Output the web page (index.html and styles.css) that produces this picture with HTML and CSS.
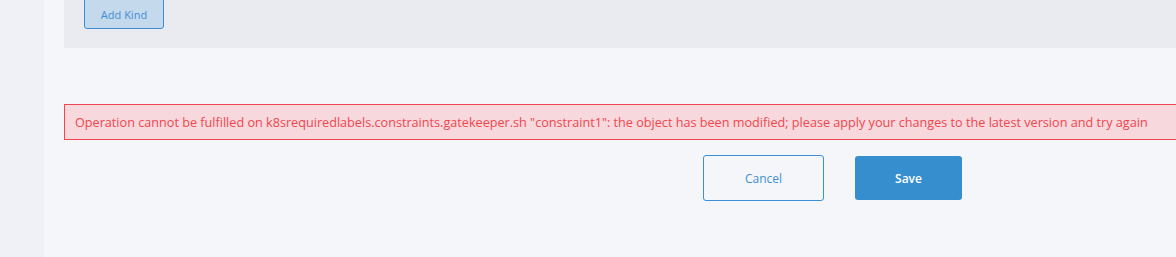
FILE: index.html
```html
<!DOCTYPE html>
<html>
<head>
<meta charset="utf-8">
<link rel="stylesheet" href="styles.css">
</head>
<body>
<div class="sidebar"></div>
<div class="main">
  <div class="panel">
    <button class="btn-add">Add Kind</button>
  </div>
  <div class="error">Operation cannot be fulfilled on k8srequiredlabels.constraints.gatekeeper.sh "constraint1": the object has been modified; please apply your changes to the latest version and try again</div>
  <div class="actions">
    <button class="btn-cancel">Cancel</button>
    <button class="btn-save">Save</button>
  </div>
</div>
</body>
</html>
```
FILE: styles.css
```css
html, body {
  margin: 0;
  height: 100%;
  overflow: hidden;
}
body {
  display: flex;
  font-family: "Open Sans", "Noto Sans", sans-serif;
  background: #f5f6fa;
}
.sidebar {
  width: 44px;
  flex: none;
  background: #f0f1f6;
}
.main {
  flex: 1;
  min-width: 0;
  overflow: hidden;
  padding-left: 20px;
  background: #f5f6fa;
}
.panel {
  display: flex;
  align-items: flex-start;
  height: 48px;
  background: #eaebf0;
  padding-left: 20px;
  box-sizing: border-box;
}
.btn-add {
  margin-top: -2px;
  width: 80px;
  height: 31px;
  background: #c5d9ec;
  border: 1px solid #3d8fd6;
  border-radius: 3px;
  color: #3d8fd6;
  font-family: inherit;
  font-size: 11px;
  padding: 2px 0 0;
}
.error {
  margin-top: 56px;
  margin-right: -10px;
  height: 36px;
  box-sizing: border-box;
  background: #f7d8dc;
  border: 1px solid #f0464f;
  color: #f0464f;
  font-size: 12.65px;
  line-height: 34px;
  padding-left: 10px;
  white-space: nowrap;
  overflow: hidden;
}
.actions {
  display: flex;
  align-items: center;
  gap: 31px;
  margin-top: 15px;
  padding-left: 639px;
}
.btn-cancel {
  width: 121px;
  height: 46px;
  background: #f5f6fa;
  border: 1px solid #3d8fd6;
  border-radius: 3px;
  color: #3d8fd6;
  font-family: inherit;
  font-size: 12px;
}
.btn-save {
  width: 107px;
  height: 44px;
  background: #378ecf;
  border: none;
  border-radius: 3px;
  color: #fff;
  font-family: inherit;
  font-size: 12px;
  font-weight: 600;
}
```
